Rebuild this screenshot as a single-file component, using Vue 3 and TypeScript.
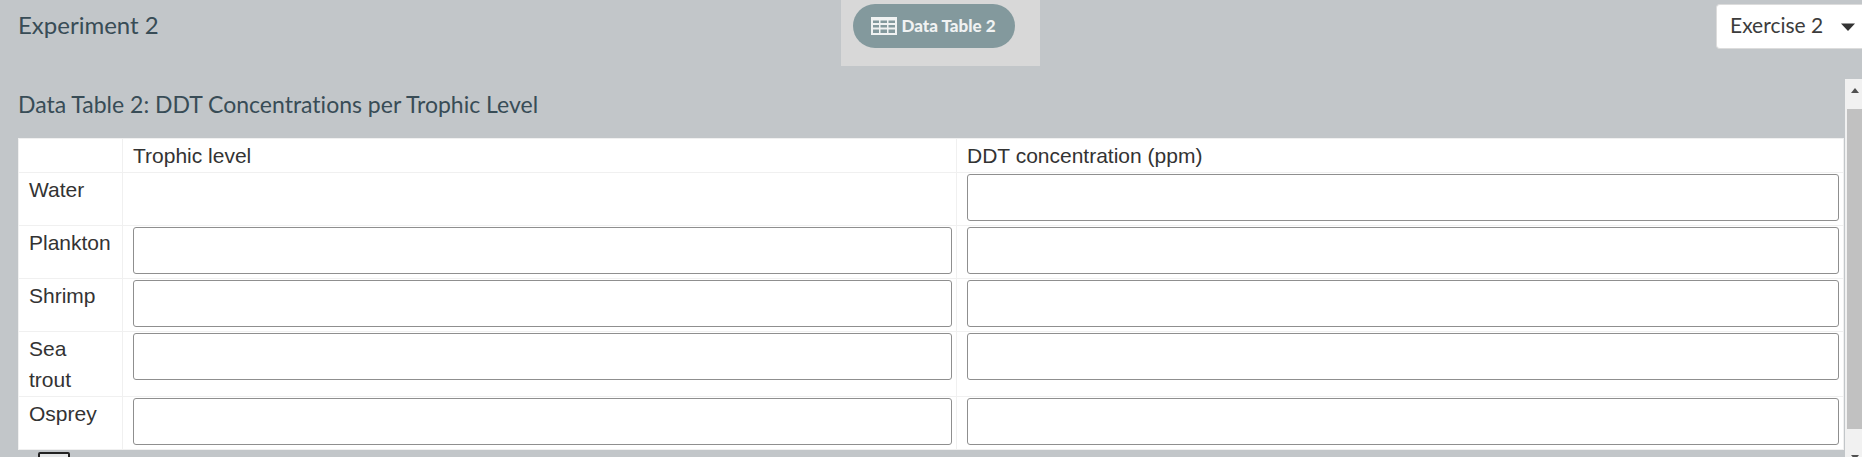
<script setup lang="ts">
import { reactive, ref } from 'vue'

interface Row {
  name: string
  hasLevel: boolean
  level: string
  ppm: string
}

const exercise = ref('Exercise 2')
const exercises: string[] = ['Exercise 1', 'Exercise 2']

const rows = reactive<Row[]>([
  { name: 'Water', hasLevel: false, level: '', ppm: '' },
  { name: 'Plankton', hasLevel: true, level: '', ppm: '' },
  { name: 'Shrimp', hasLevel: true, level: '', ppm: '' },
  { name: 'Sea trout', hasLevel: true, level: '', ppm: '' },
  { name: 'Osprey', hasLevel: true, level: '', ppm: '' },
])
</script>

<template>
  <div class="page">
    <header class="topbar">
      <h1 class="title">Experiment 2</h1>
      <div class="tab-holder">
        <button type="button" class="pill">
          <svg class="grid-icon" viewBox="0 0 26 18" aria-hidden="true">
            <path
              fill="#f0f2f2"
              fill-rule="evenodd"
              d="M0 0h26v18H0zM2 3.500v2.500h6v-2.500zM9.500 3.500v2.500h6.500v-2.500zM17.500 3.500v2.500h6.500v-2.500zM2 8v2.500h6V8zM9.500 8v2.500h6.500V8zM17.500 8v2.500h6.500V8zM2 12.500v3.500h6v-3.500zM9.500 12.500v3.500h6.500v-3.500zM17.500 12.500v3.500h6.500v-3.500z"
            />
          </svg>
          <span>Data Table 2</span>
        </button>
      </div>
      <div class="picker">
        <select v-model="exercise" class="select" aria-label="Exercise">
          <option v-for="e in exercises" :key="e" :value="e">{{ e }}</option>
        </select>
        <svg class="caret" viewBox="0 0 14 8" aria-hidden="true">
          <path d="M0 0.500h14L7 8z" fill="#333" />
        </svg>
      </div>
    </header>

    <div class="body">
      <main class="content">
        <h2 class="heading">Data Table 2: DDT Concentrations per Trophic Level</h2>
        <table class="data">
          <colgroup>
            <col class="col-name" />
            <col class="col-level" />
            <col />
          </colgroup>
          <thead>
            <tr>
              <td></td>
              <th scope="col">Trophic level</th>
              <th scope="col">DDT concentration (ppm)</th>
            </tr>
          </thead>
          <tbody>
            <tr v-for="row in rows" :key="row.name">
              <th scope="row">{{ row.name }}</th>
              <td>
                <input
                  v-if="row.hasLevel"
                  v-model="row.level"
                  type="text"
                  class="field"
                  :aria-label="`${row.name} trophic level`"
                />
              </td>
              <td>
                <input
                  v-model="row.ppm"
                  type="text"
                  class="field"
                  :aria-label="`${row.name} DDT concentration (ppm)`"
                />
              </td>
            </tr>
          </tbody>
        </table>
        <button type="button" class="panel-button" aria-label="Open panel">
          <svg class="panel-icon" viewBox="0 0 32 26" aria-hidden="true">
            <rect x="1" y="1" width="30" height="24" rx="1" fill="#e4e6e7" stroke="#222" stroke-width="2" />
          </svg>
        </button>
      </main>

      <div class="scrollbar" aria-hidden="true">
        <svg class="arrow" viewBox="0 0 8 5"><path d="M4 0l4 5H0z" fill="#505050" /></svg>
        <div class="thumb"></div>
        <svg class="arrow" viewBox="0 0 8 5"><path d="M0 0h8L4 5z" fill="#505050" /></svg>
      </div>
    </div>
  </div>
</template>

<style>
body {
  margin: 0;
  background: #c2c6c9;
}
</style>

<style scoped>
.page {
  height: 100vh;
  display: flex;
  flex-direction: column;
  overflow: hidden;
  background: #c2c6c9;
  font-family: Lato, sans-serif;
  font-variant-ligatures: none;
  color: #384c56;
}

.topbar {
  flex: none;
  display: grid;
  grid-template-columns: 1fr auto 1fr;
  align-items: start;
  height: 79px;
  padding-left: 18px;
}

.title,
.heading {
  margin: 0;
  font-weight: 400;
  line-height: 32px;
}

.title {
  font-size: 24px;
  padding-top: 9px;
}

.tab-holder {
  box-sizing: border-box;
  height: 66px;
  padding: 4px 25px 0 12px;
  background: #d8d8d8;
}

.pill {
  display: flex;
  align-items: center;
  justify-content: center;
  gap: 4px;
  width: 162px;
  height: 44px;
  padding: 0;
  border: 0;
  border-radius: 22px;
  background: #83999d;
  color: #f0f2f2;
  font: 900 17px/24px Lato, sans-serif;
  white-space: nowrap;
}

.grid-icon {
  width: 26px;
  height: 18px;
}

.picker {
  justify-self: end;
  position: relative;
  width: 146px;
  margin-top: 4px;
}

.select {
  box-sizing: border-box;
  width: 100%;
  height: 45px;
  padding: 0 24px 4px 13px;
  border: 1px solid #dcdcdc;
  border-right: 0;
  border-radius: 4px 0 0 4px;
  background: #fff;
  color: #3c3c3c;
  font: 400 21px/28px Lato, sans-serif;
  appearance: none;
}

.caret {
  position: absolute;
  right: 7px;
  top: 19px;
  width: 14px;
  height: 8px;
  pointer-events: none;
}

.body {
  flex: 1;
  min-height: 0;
  display: flex;
}

.content {
  flex: 1;
  min-width: 0;
  padding: 9px 0 0 18px;
  overflow: hidden;
}

.heading {
  font-size: 23px;
  margin-bottom: 18px;
}

.data {
  width: 100%;
  table-layout: fixed;
  border-collapse: collapse;
  background: #fff;
  color: #333;
  font: 400 21px/31px "Liberation Sans", Arial, sans-serif;
}

.col-name {
  width: 104px;
}

.col-level {
  width: 45.7%;
}

.data th,
.data td {
  box-sizing: border-box;
  padding: 1px 4px 1px 10px;
  border: 1px solid #f0f0f0;
  text-align: left;
  vertical-align: top;
  font-weight: 400;
}

.data tbody th {
  padding-right: 10px;
}

.field {
  display: block;
  box-sizing: border-box;
  width: 100%;
  height: 47px;
  margin-bottom: 3px;
  padding: 0 8px;
  border: 1px solid #8f8f8f;
  border-radius: 3px;
  background: #fff;
  font: inherit;
}

.panel-button {
  display: block;
  margin: 2px 0 0 20px;
  padding: 0;
  border: 0;
  background: none;
}

.panel-icon {
  display: block;
  width: 32px;
  height: 26px;
}

.scrollbar {
  flex: none;
  display: flex;
  flex-direction: column;
  align-items: center;
  box-sizing: border-box;
  width: 17px;
  padding: 9px 0 0 2px;
  margin-left: 1px;
  background: #f1f1f1;
}

.arrow {
  flex: none;
  width: 8px;
  height: 5px;
}

.thumb {
  width: 100%;
  height: 320px;
  flex: none;
  margin: 16px 0 26px;
  background: #c1c1c1;
}
</style>
